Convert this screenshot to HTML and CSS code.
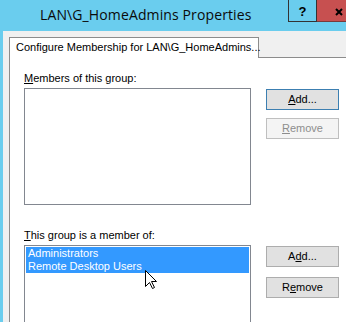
FILE: index.html
```html
<!DOCTYPE html>
<html>
<head>
<meta charset="utf-8">
<title>LAN\G_HomeAdmins Properties</title>
<link rel="stylesheet" href="styles.css">
</head>
<body>
<div class="window">
  <div class="titlebar">
    <div class="title">LAN\G_HomeAdmins Properties</div>
    <div class="cap-btn help">?</div>
    <div class="cap-btn close">
      <svg width="8" height="8" viewBox="0 0 8 8"><path d="M1 1 L7 7 M7 1 L1 7" stroke="#000" stroke-width="2" fill="none"/></svg>
    </div>
  </div>
  <div class="frame">
    <div class="client">
      <div class="tabs">
        <div class="tab">Configure Membership for LAN\G_HomeAdmins...</div>
      </div>
      <div class="panel">
        <div class="section">
          <div class="col">
            <div class="label"><u>M</u>embers of this group:</div>
            <div class="listbox short"></div>
          </div>
          <div class="buttons">
            <button class="btn default"><u>A</u>dd...</button>
            <button class="btn" disabled><u>R</u>emove</button>
          </div>
        </div>
        <div class="section second">
          <div class="col">
            <div class="label"><u>T</u>his group is a member of:</div>
            <div class="listbox tall">
              <div class="item selected">Administrators</div>
              <div class="item selected">Remote Desktop Users</div>
            </div>
          </div>
          <div class="buttons wide">
            <button class="btn">A<u>d</u>d...</button>
            <button class="btn">R<u>e</u>move</button>
          </div>
        </div>
      </div>
    </div>
  </div>
  <svg class="cursor" width="13" height="20" viewBox="0 0 13 20">
    <path d="M0.5 0.5 L0.5 16.5 L4.5 12.5 L7.5 18.5 L9.5 17.5 L6.5 11.5 L11.5 11.5 Z" fill="#fff" stroke="#000" stroke-width="1"/>
  </svg>
</div>
</body>
</html>
```
FILE: styles.css
```css
html, body {
  margin: 0;
  padding: 0;
}
body {
  width: 346px;
  height: 322px;
  overflow: hidden;
  background: #f0f0f0;
  font-family: "Liberation Sans", Arial, sans-serif;
  font-size: 11px;
  color: #000;
}
.window {
  position: relative;
  width: 362px;
  height: 322px;
  overflow: hidden;
}
.titlebar {
  display: flex;
  height: 31px;
  background: #6acdee;
}
.title {
  flex: 1;
  padding-left: 40px;
  font-family: "Open Sans", "Noto Sans", sans-serif;
  font-size: 14px;
  letter-spacing: 0.12px;
  line-height: 29px;
  color: #0a0a0a;
  white-space: nowrap;
}
.cap-btn {
  box-sizing: border-box;
  height: 22px;
  display: flex;
  align-items: center;
  justify-content: center;
}
.help {
  width: 29px;
  border: 1px solid #333;
  border-top: none;
  font-weight: bold;
  font-size: 13px;
  font-family: "Liberation Sans", Arial, sans-serif;
  padding-top: 1px;
}
.close {
  width: 45px;
  background: #c75050;
  border-bottom: 1px solid #7a3a3a;
  padding-top: 2px;
  padding-right: 1px;
}
.frame {
  display: flex;
  height: 291px;
  border-left: 3px solid #6acdee;
}
.client {
  flex: 1;
  padding: 6px 0 0 6px;
  display: flex;
  flex-direction: column;
}
.tabs {
  display: flex;
}
.tab {
  box-sizing: border-box;
  width: 250px;
  height: 21px;
  margin-bottom: -1px;
  position: relative;
  z-index: 1;
  background: #fff;
  border: 1px solid #8c8c8c;
  border-bottom: none;
  padding: 3px 0 0 6px;
  line-height: 13px;
  white-space: nowrap;
}
.panel {
  flex: 1;
  background: #fff;
  border-top: 1px solid #8c8c8c;
  border-left: 1px solid #8c8c8c;
  padding: 14px 0 0 14px;
}
.section {
  display: flex;
}
.section.second {
  margin-top: 24px;
}
.col {
  display: flex;
  flex-direction: column;
  width: 227px;
}
.label {
  line-height: 13px;
  height: 13px;
  margin-bottom: 3px;
  white-space: nowrap;
}
.listbox {
  box-sizing: border-box;
  border: 1px solid #828790;
  background: #fff;
  padding: 1px;
}
.listbox.short {
  height: 117px;
}
.listbox.tall {
  height: 78px;
}
.item {
  height: 13px;
  line-height: 13px;
  padding-left: 2px;
  white-space: nowrap;
}
.item.selected {
  background: #3399ff;
  color: #fff;
}
.buttons {
  display: flex;
  flex-direction: column;
  gap: 8px;
  margin-left: 15px;
  padding-top: 17px;
}
.buttons.wide {
  gap: 10px;
}
.btn {
  box-sizing: border-box;
  width: 73px;
  height: 21px;
  margin: 0;
  padding: 0;
  background: #e1e1e1;
  border: 1px solid #adadad;
  border-radius: 0;
  font-family: "Liberation Sans", Arial, sans-serif;
  font-size: 11px;
  line-height: 13px;
  color: #000;
}
.btn.default {
  border-color: #3c7fb1;
}
.btn:disabled {
  background: #f4f4f4;
  border-color: #bfbfbf;
  color: #8d8d8d;
}
.cursor {
  position: absolute;
  left: 145px;
  top: 270px;
}
```
